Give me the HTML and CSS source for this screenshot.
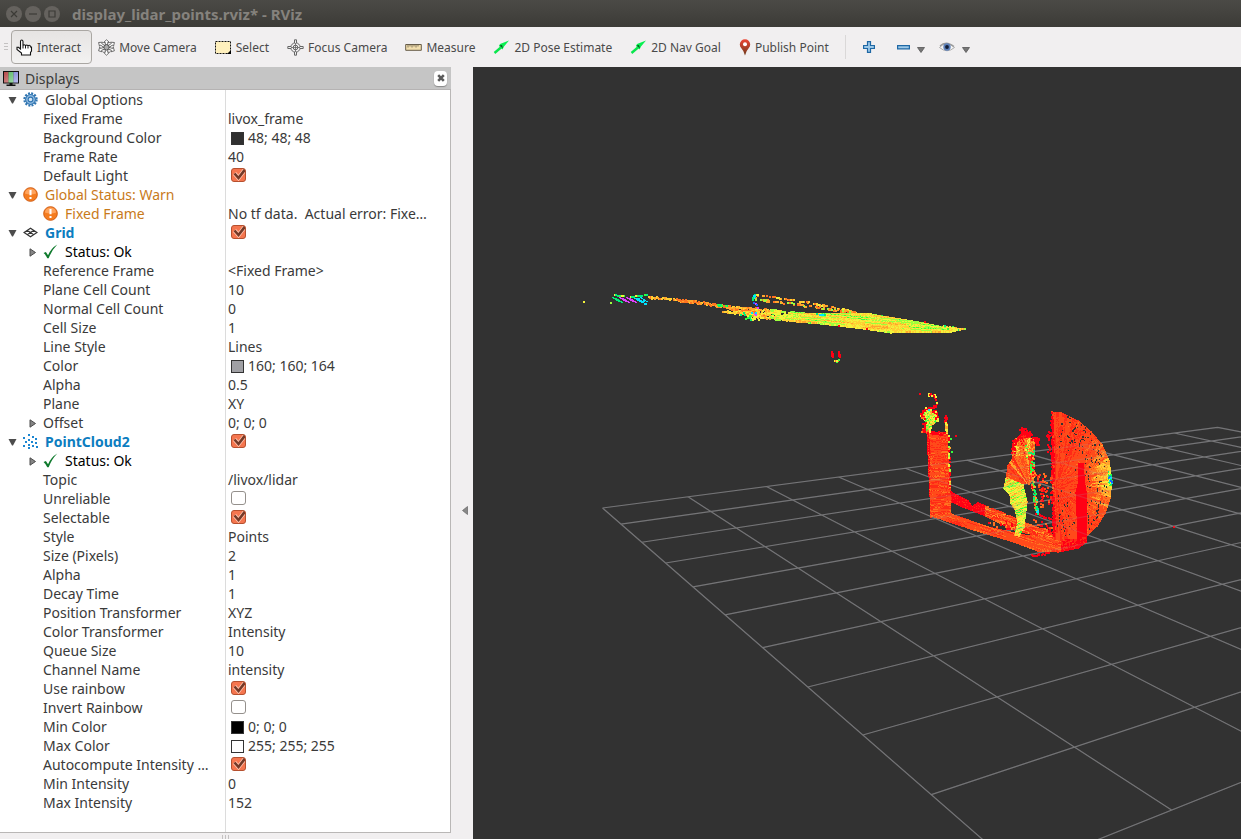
FILE: index.html
```html
<!DOCTYPE html>
<html lang="en">
<head>
    <meta charset="UTF-8">
    <meta name="viewport" content="width=device-width, initial-scale=1.0">
    <title>display_lidar_points.rviz* - RViz</title>
    <link rel="stylesheet" href="styles.css">
</head>
<body>
    <svg class="sprite" aria-hidden="true">
        <symbol id="i-open" viewBox="0 0 9 9"><path d="M.5 1h8L5 7.500H4z" fill="#4c4c4c"/></symbol>
        <symbol id="i-closed" viewBox="0 0 9 9"><path d="M2 .8l5.500 3.700L2 8.200z" fill="#858585" stroke="#4c4c4c"/></symbol>
        <symbol id="i-gear" viewBox="0 0 14 14">
            <circle cx="7" cy="7" r="5.700" fill="none" stroke="#2f74b0" stroke-width="2" stroke-dasharray="1.800 1.180"/>
            <circle cx="7" cy="7" r="4.600" fill="#8db9e0" stroke="#2f74b0"/>
            <circle cx="7" cy="7" r="2.200" fill="#d5e6f5" stroke="#2f74b0"/>
        </symbol>
        <symbol id="i-warn" viewBox="0 0 16 16">
            <circle cx="8" cy="8" r="7.300" fill="#f57c1f" stroke="#cf5a10"/>
            <path d="M2 7a6 5.500 0 0 1 12 0q-6 2-12 0z" fill="#ffa35c"/>
            <path d="M8 3.300v5.400M8 10.700v2" stroke="#fff" stroke-width="2.200"/>
        </symbol>
        <symbol id="i-grid" viewBox="0 0 14 10">
            <path d="M1 5l6-4 6 4-6 4zM4 3l6 4M10 3L4 7" fill="none" stroke="#333" stroke-width="1.100"/>
        </symbol>
        <symbol id="i-ok" viewBox="0 0 14 14"><path d="M.5 8.500l2.200-1 2 3Q7.500 4 13.300.5 8 6 5.300 13.300H4Q2.800 10.500.5 8.500z" fill="#0f7a2d"/></symbol>
        <symbol id="i-cloud" viewBox="0 0 15 15">
            <path d="M5 0h2v2H5zM9 2h2v2H9zM0 3h2v2H0zM5 5h2v2H5zM12 4h2v2h-2zM2 7h2v2H2zM8 7h2v2H8zM12 8h2v2h-2zM0 11h2v2H0zM5 10h2v2H5zM9 11h2v2H9zM13 12h2v2h-2zM5 13h2v2H5z" fill="#1c86d1"/>
        </symbol>
        <symbol id="i-arrow" viewBox="0 0 16 14">
            <path d="M1 13L8 7" stroke="#08e64c" stroke-width="2.400"/>
            <path d="M15.500.5L6.500 4 5.500 6l3.500 3.500 1.500-3z" fill="#08f050"/>
            <path d="M6 5.500L9.500 8.500 8.500 5z" fill="#075b22"/>
        </symbol>
        <symbol id="i-drop" viewBox="0 0 8 6"><path d="M.5.5h7L4 5.500z" fill="#777" stroke="#555" stroke-width=".8"/></symbol>
    </svg>

    <div class="window">
        <header class="titlebar">
            <button class="win-btn" aria-label="Close"><svg viewBox="0 0 16 16"><path d="M5 5l6 6M11 5l-6 6"/></svg></button>
            <button class="win-btn" aria-label="Minimize"><svg viewBox="0 0 16 16"><path d="M4 8h8"/></svg></button>
            <button class="win-btn" aria-label="Maximize"><svg viewBox="0 0 16 16"><path d="M5 5h6v6H5z"/></svg></button>
            <h1 class="title">display_lidar_points.rviz* - RViz</h1>
        </header>

        <nav class="toolbar" aria-label="Tools">
            <span class="grip"></span>
            <button class="tool active">
                <svg width="17" height="17" viewBox="0 0 17 17"><path d="M4.500 10V2.500Q4.500 1 5.700 1T7 2.500V7q0-1.200 1.200-1.200T9.500 7q0-1 1.200-1T12 7.300q0-1 1.200-1T14.500 8h1v4l-1 1.500V16H5.500v-2L1 10.500V8.300h1.500z" fill="#fff" stroke="#111" stroke-width="1.100"/><path d="M7 7v2.500M9.500 7v2.500M12 7.300v2.200" stroke="#111"/></svg>
                <span>Interact</span>
            </button>
            <button class="tool">
                <svg width="17" height="17" viewBox="0 0 17 17"><g fill="#fff" stroke="#4a4a4a" stroke-width=".8"><path d="M8.500.8L11.500 3.500H9.700V6H7.300V3.500H5.500zM8.500 16.200l3-2.900H9.700V10H7.300v3.300H5.500z"/><path d="M.6 3.500L4.500 3.200 3.700 4.500 7 6.800 6 8.500 2.500 6l-1 1.300zM16.400 3.500l-3.900-.3.800 1.300L10 6.800l1 1.700L14.500 6l1 1.300z"/><path d="M.6 11.800l3.600 1-.6-1.600 3.900-1.400-1.200-1.600L2.500 9.500l-.7-1.400zM16.400 11.800l-3.600 1 .6-1.600-3.900-1.400 1.200-1.600 3.800 1.300.7-1.400z"/><path d="M6 7l2.500-1.500L11 7v2.700l-2.500 1.500L6 9.700z" fill="#aaa"/></g></svg>
                <span>Move Camera</span>
            </button>
            <button class="tool">
                <svg width="17" height="17" viewBox="0 0 17 17"><path d="M.5 2.500h15v12H.5z" fill="#fff0bd" stroke="#111" stroke-dasharray="2 1"/><path d="M16 11v4h-4z" fill="#000"/></svg>
                <span>Select</span>
            </button>
            <button class="tool">
                <svg width="17" height="17" viewBox="0 0 17 17"><g fill="none" stroke="#666"><circle cx="8.500" cy="8.500" r="4.700"/><circle cx="8.500" cy="8.500" r="2.300"/><path d="M4 8.500h9M8.500 4v9" stroke-width=".8"/><path d="M7.500 4V.8h2V4M7.500 13v3.200h2V13M4 7.500H.8v2H4M13 7.500h3.200v2H13" fill="#eee"/></g></svg>
                <span>Focus Camera</span>
            </button>
            <button class="tool">
                <svg width="17" height="17" viewBox="0 0 17 17"><path d="M.7 5.500h15.600v5.800H.7z" fill="#f3dfae" stroke="#665c49"/><path d="M3 6v2.500M5 6v1.500M7 6v2.500M9 6v1.500M11 6v2.500M13 6v1.500" stroke="#665c49" stroke-width=".8"/></svg>
                <span>Measure</span>
            </button>
            <button class="tool"><svg width="17" height="14"><use href="#i-arrow"/></svg><span>2D Pose Estimate</span></button>
            <button class="tool"><svg width="17" height="14"><use href="#i-arrow"/></svg><span>2D Nav Goal</span></button>
            <button class="tool">
                <svg width="12" height="17" viewBox="0 0 12 17"><defs><linearGradient id="pin" x2="0" y2="1"><stop offset="0" stop-color="#ee4634"/><stop offset="1" stop-color="#6d3a1c"/></linearGradient></defs><path d="M6 16.500Q5 12 2.200 9A5.200 5.200 0 1 1 9.800 9Q7 12 6 16.500z" fill="url(#pin)"/><circle cx="6" cy="5.300" r="2" fill="#fff"/></svg>
                <span>Publish Point</span>
            </button>
            <span class="separator"></span>
            <button class="tool mini add" aria-label="Add tool"><svg width="12" height="12" viewBox="0 0 12 12"><path d="M4.500.6h3v3.900h3.900v3H7.500v3.900h-3V7.500H.6v-3h3.900z" fill="#9cc8e8" stroke="#1f68a5" stroke-width="1.200"/></svg></button>
            <button class="tool mini" aria-label="Remove tool"><svg width="13" height="5" viewBox="0 0 13 5"><path d="M.6.6h11.800v3.300H.6z" fill="#9cc8e8" stroke="#1f68a5" stroke-width="1.200"/></svg><svg class="drop" width="8" height="6"><use href="#i-drop"/></svg></button>
            <button class="tool mini" aria-label="Visibility"><svg width="16" height="12" viewBox="0 0 16 12"><path d="M.5 6.500Q7-1 15.500 6.500 8 13 .5 6.500z" fill="#f5f5f5" stroke="#aaa"/><path d="M1 5Q7-1 15 5.500" fill="none" stroke="#999" stroke-width="1.300"/><circle cx="8" cy="6" r="3.700" fill="#5c7fb8"/><circle cx="8" cy="6" r="1.900" fill="#101b33"/></svg><svg class="drop" width="8" height="6"><use href="#i-drop"/></svg></button>
        </nav>

        <main class="workspace">
            <section class="dock" aria-label="Displays">
                <div class="dock-header">
                    <svg width="18" height="17" viewBox="0 0 18 17"><defs><linearGradient id="shine" x2="1" y2="1"><stop offset="0" stop-color="#fff" stop-opacity="0"/><stop offset="1" stop-color="#fff" stop-opacity=".5"/></linearGradient></defs><path d="M1 1h16v12.500H1z" fill="#111"/><path d="M2 2h4.500v10.500H2z" fill="#b54a4a"/><path d="M6.500 2h5v10.500h-5z" fill="#55b865"/><path d="M11.500 2H16v10.500h-4.500z" fill="#7379d8"/><path d="M2 2h14v10.500H2z" fill="url(#shine)"/><path d="M7.500 13h3v1.500h3V16h-9v-1.500h3z" fill="#111"/></svg>
                    <h2>Displays</h2>
                    <button class="close" aria-label="Close panel"><svg width="8" height="8" viewBox="0 0 8 8"><path d="M1.200 1.200l5.600 5.600M6.800 1.200L1.200 6.800" stroke="#5a5a5a" stroke-width="2.600"/></svg></button>
                </div>
                <div class="tree-body">
                    <table class="tree">
                        <tbody>
                            <tr class="group"><th><svg class="tw"><use href="#i-open"/></svg><svg class="ic"><use href="#i-gear"/></svg>Global Options</th><td></td></tr>
                            <tr><th>Fixed Frame</th><td>livox_frame</td></tr>
                            <tr><th>Background Color</th><td><i class="swatch dark"></i>48; 48; 48</td></tr>
                            <tr><th>Frame Rate</th><td>40</td></tr>
                            <tr><th><label for="light">Default Light</label></th><td><input type="checkbox" id="light" checked></td></tr>
                            <tr class="group warn"><th><svg class="tw"><use href="#i-open"/></svg><svg class="ic"><use href="#i-warn"/></svg>Global Status: Warn</th><td></td></tr>
                            <tr class="warn"><th><svg class="ic"><use href="#i-warn"/></svg>Fixed Frame</th><td>No tf data.&nbsp; Actual error: Fixe…</td></tr>
                            <tr class="group display"><th><svg class="tw"><use href="#i-open"/></svg><svg class="ic"><use href="#i-grid"/></svg><label for="grid">Grid</label></th><td><input type="checkbox" id="grid" checked></td></tr>
                            <tr class="ok"><th><svg class="tw"><use href="#i-closed"/></svg><svg class="ic"><use href="#i-ok"/></svg>Status: Ok</th><td></td></tr>
                            <tr><th>Reference Frame</th><td>&lt;Fixed Frame&gt;</td></tr>
                            <tr><th>Plane Cell Count</th><td>10</td></tr>
                            <tr><th>Normal Cell Count</th><td>0</td></tr>
                            <tr><th>Cell Size</th><td>1</td></tr>
                            <tr><th>Line Style</th><td>Lines</td></tr>
                            <tr><th>Color</th><td><i class="swatch gray"></i>160; 160; 164</td></tr>
                            <tr><th>Alpha</th><td>0.5</td></tr>
                            <tr><th>Plane</th><td>XY</td></tr>
                            <tr><th><svg class="tw"><use href="#i-closed"/></svg>Offset</th><td>0; 0; 0</td></tr>
                            <tr class="group display"><th><svg class="tw"><use href="#i-open"/></svg><svg class="ic"><use href="#i-cloud"/></svg><label for="cloud">PointCloud2</label></th><td><input type="checkbox" id="cloud" checked></td></tr>
                            <tr class="ok"><th><svg class="tw"><use href="#i-closed"/></svg><svg class="ic"><use href="#i-ok"/></svg>Status: Ok</th><td></td></tr>
                            <tr><th>Topic</th><td>/livox/lidar</td></tr>
                            <tr><th><label for="unreliable">Unreliable</label></th><td><input type="checkbox" id="unreliable"></td></tr>
                            <tr><th><label for="selectable">Selectable</label></th><td><input type="checkbox" id="selectable" checked></td></tr>
                            <tr><th>Style</th><td>Points</td></tr>
                            <tr><th>Size (Pixels)</th><td>2</td></tr>
                            <tr><th>Alpha</th><td>1</td></tr>
                            <tr><th>Decay Time</th><td>1</td></tr>
                            <tr><th>Position Transformer</th><td>XYZ</td></tr>
                            <tr><th>Color Transformer</th><td>Intensity</td></tr>
                            <tr><th>Queue Size</th><td>10</td></tr>
                            <tr><th>Channel Name</th><td>intensity</td></tr>
                            <tr><th><label for="rainbow">Use rainbow</label></th><td><input type="checkbox" id="rainbow" checked></td></tr>
                            <tr><th><label for="invert">Invert Rainbow</label></th><td><input type="checkbox" id="invert"></td></tr>
                            <tr><th>Min Color</th><td><i class="swatch black"></i>0; 0; 0</td></tr>
                            <tr><th>Max Color</th><td><i class="swatch white"></i>255; 255; 255</td></tr>
                            <tr><th><label for="auto">Autocompute Intensity …</label></th><td><input type="checkbox" id="auto" checked></td></tr>
                            <tr><th>Min Intensity</th><td>0</td></tr>
                            <tr><th>Max Intensity</th><td>152</td></tr>
                        </tbody>
                    </table>
                </div>
                <div class="dock-grip"><span></span></div>
            </section>
            <button class="collapse" aria-label="Hide panel"><svg width="6" height="9" viewBox="0 0 6 9"><path d="M5.500.5v8L.5 4.500z" fill="#888" stroke="#666" stroke-width=".7"/></svg></button>
            <div class="viewport"><canvas id="scene"></canvas></div>
        </main>
    </div>
    <script src="scene.js"></script>
</body>
</html>
```

FILE: styles.css
```css
* {
    box-sizing: border-box;
}
body {
    margin: 0;
    background: #f1eff0;
    color: #3a3a3a;
    font-family: "Noto Sans", "Open Sans", sans-serif;
    font-size: 14px;
}
button {
    border: 0;
    padding: 0;
    background: none;
    color: inherit;
    font: inherit;
}
.sprite {
    position: absolute;
    width: 0;
    height: 0;
}
.window {
    display: flex;
    flex-direction: column;
    height: 100vh;
    overflow: hidden;
}

/* title bar */
.titlebar {
    display: flex;
    align-items: center;
    flex: none;
    gap: 3px;
    height: 27px;
    padding-left: 6px;
    background: linear-gradient(#4b4a46, #3c3b37);
}
.win-btn {
    width: 16px;
    height: 16px;
    border-radius: 50%;
    background: #65625e;
}
.win-btn svg {
    display: block;
    fill: none;
    stroke: #3c3b37;
    stroke-width: 1.2;
}
.title {
    margin: 0 0 0 9px;
    color: #85827d;
    font-size: 15px;
    font-weight: bold;
}

/* toolbar */
.toolbar {
    display: flex;
    align-items: center;
    flex: none;
    height: 40px;
    padding-left: 4px;
    color: #4a4a4a;
    font-size: 12px;
    white-space: nowrap;
}
.grip {
    width: 4px;
    height: 9px;
    margin-right: 3px;
    background: repeating-linear-gradient(#c4c2c2 0 1px, transparent 1px 3px);
}
.tool {
    display: flex;
    align-items: center;
    gap: 4px;
    height: 34px;
    padding: 0 12px 0 6px;
}
.tool svg {
    flex: none;
}
.tool.active {
    padding: 0 10px 0 4px;
    border: 1px solid #aaa7a3;
    border-radius: 4px;
    background: linear-gradient(#e6e4e3, #f3f2f1);
}
.separator {
    width: 1px;
    height: 24px;
    margin: 0 10px 0 4px;
    background: #dad8d8;
}
.tool.mini {
    padding: 0 7px;
}
.tool.add {
    margin-right: 8px;
}
.drop {
    margin: 6px 0 0 3px;
}

/* displays panel */
.workspace {
    display: flex;
    flex: 1;
    min-height: 0;
}
.dock {
    display: flex;
    flex-direction: column;
    flex: none;
    width: 451px;
}
.dock-header {
    display: flex;
    align-items: center;
    gap: 5px;
    height: 23px;
    padding: 0 4px 0 2px;
    border-bottom: 1px solid #b5b3b3;
    background: #c5c5c5;
}
.dock-header h2 {
    flex: 1;
    margin: 0;
    font-size: 14px;
    font-weight: normal;
}
.close {
    display: flex;
    align-items: center;
    justify-content: center;
    width: 13px;
    height: 15px;
    border-radius: 4px;
    background: #fff;
    box-shadow: 0 1px 1px #888;
}
.tree-body {
    flex: 1;
    min-height: 0;
    overflow: hidden;
    border: solid #b9b7b6;
    border-width: 0 1px 1px 0;
    background: linear-gradient(#dcdcdc, #dcdcdc) 225px 0 / 1px 100% no-repeat, #fff;
}
.tree {
    width: 100%;
    table-layout: fixed;
    border-collapse: collapse;
    line-height: 19px;
}
.tree th,
.tree td {
    height: 19px;
    padding: 0 10px 0 2px;
    overflow: hidden;
    font-weight: normal;
    text-align: left;
    text-overflow: ellipsis;
    white-space: nowrap;
}
.tree th {
    width: 226px;
    padding: 0 7px 0 43px;
}
.tree .group th {
    padding-left: 23px;
}
.tree .warn th {
    color: #c97a1a;
}
.tree .display th {
    color: #0c7dc0;
    font-weight: bold;
}
.tree .ok th {
    color: #000;
}
.tw {
    width: 9px;
    height: 9px;
    margin: 0 6px 0 -15px;
}
.ic {
    width: 15px;
    height: 15px;
    margin-right: 7px;
    vertical-align: -2px;
}
.swatch {
    display: inline-block;
    width: 13px;
    height: 13px;
    margin: 0 4px 0 3px;
    border: 1px solid #333;
    vertical-align: -2px;
}
.dark {
    background: #303030;
}
.gray {
    background: #a0a0a4;
}
.black {
    background: #000;
}
.white {
    background: #fff;
}
input[type="checkbox"] {
    display: block;
    width: 15px;
    height: 14px;
    margin: 0 0 1px 3px;
    appearance: none;
    border: 1px solid #94908c;
    border-radius: 3px;
    background: #fff;
}
input[type="checkbox"]:checked {
    border-color: #b5502f;
    background: url('data:image/svg+xml,<svg xmlns="http://www.w3.org/2000/svg" viewBox="0 0 12 12"><path d="M1.500 4.500l4 4.500L12 .5" fill="none" stroke="%23ffc3ad" stroke-width="4.200"/><path d="M1.500 4.500l4 4.500L12 .5" fill="none" stroke="%23743a28" stroke-width="2.600"/></svg>') center / 12px 12px no-repeat, #f5764f;
}
.dock-grip {
    display: flex;
    justify-content: center;
    height: 6px;
    padding-top: 2px;
}
.dock-grip span {
    width: 8px;
    height: 4px;
    background: repeating-linear-gradient(90deg, #c4c2c2 0 1px, transparent 1px 3px);
}
.collapse {
    flex: none;
    width: 22px;
    padding: 113px 0 0 6px;
}

/* 3d view */
.viewport {
    flex: 1;
    min-width: 0;
    overflow: hidden;
    background: #323232;
}
#scene {
    display: block;
    width: 100%;
    height: 100%;
}
```

FILE: scene.js
```js
const canvas = document.getElementById('scene');
const ctx = canvas.getContext('2d');

const RED = '#ff0014', VERM = '#ff2a16', ORED = '#ff4a1a', ORG = '#ff7420', AMBER = '#ffa52c';
const GOLD = '#ffd033', YEL = '#f2f23c', LIME = '#9cff3c', GRN = '#35ff3c', MINT = '#00f078';
const CYAN = '#00e4ff', BLUE = '#1464ff', MAG = '#e040ff';
const BACK = '#323232';

let seed = 7;
function rnd() {
    seed = (seed * 1664525 + 1013904223) % 4294967296;
    return seed / 4294967296;
}

// repeatable value for a cell, used for streaks and gaps
function hash(a, b) {
    const s = Math.sin(Math.floor(a) * 127.1 + Math.floor(b) * 311.7) * 43758.5453;
    return s - Math.floor(s);
}

function pick(list, t) {
    return list[Math.max(0, Math.min(list.length - 1, Math.floor(t * list.length)))];
}

function dot(x, y, color) {
    ctx.fillStyle = color;
    ctx.fillRect(Math.round(x), Math.round(y), 2, 2);
}

// fill a polygon with points; color(x, y) may return null for a gap
function cloud(points, color) {
    const path = new Path2D();
    points.forEach((p, i) => i ? path.lineTo(p[0], p[1]) : path.moveTo(p[0], p[1]));
    path.closePath();
    const xs = points.map(p => p[0]), ys = points.map(p => p[1]);
    ctx.save();
    ctx.setTransform(1, 0, 0, 1, 0, 0);
    const inside = [];
    for (let y = Math.min(...ys); y <= Math.max(...ys); y++) {
        for (let x = Math.min(...xs); x <= Math.max(...xs); x++) {
            if (ctx.isPointInPath(path, x, y)) inside.push([x, y]);
        }
    }
    ctx.restore();
    inside.forEach(([x, y]) => {
        const c = color(x, y);
        if (c) dot(x, y, c);
    });
}

// points scattered along a line
function trail(points, width, count, colors) {
    for (let s = 0; s < points.length - 1; s++) {
        const [x1, y1] = points[s], [x2, y2] = points[s + 1];
        for (let i = 0; i < count; i++) {
            const t = rnd();
            dot(x1 + (x2 - x1) * t + (rnd() - 0.5) * width, y1 + (y2 - y1) * t + (rnd() - 0.5) * width, pick(colors, rnd()));
        }
    }
}

function streak(x, y, slope, length) {
    const row = y - x * slope;
    return hash(x / length + hash(row, 3) * 9, row) * 0.8 + rnd() * 0.2;
}

// 10 x 10 ground plane in perspective
function ground(u, v) {
    const w = 1 + 0.04533 * u - 0.05833 * v;
    return [(602.5 + 116.7 * u - 17.79 * v) / w, (508 + 11.3 * u - 14.5 * v) / w];
}

function drawGrid() {
    ctx.strokeStyle = 'rgba(160, 160, 164, 0.5)';
    ctx.lineWidth = 1.2;
    ctx.beginPath();
    for (let i = 0; i <= 10; i++) {
        ctx.moveTo(...ground(i, 0));
        ctx.lineTo(...ground(i, 10));
        ctx.moveTo(...ground(0, i));
        ctx.lineTo(...ground(10, i));
    }
    ctx.stroke();
}

function drawRoof() {
    trail([[646, 296], [673, 299], [700, 302], [728, 306]], 2, 30, [ORG, AMBER, GOLD]);
    trail([[676, 299], [700, 302], [732, 307]], 3, 30, [ORG, AMBER, ORG]);
    trail([[755, 294], [790, 299], [825, 305], [858, 312]], 1, 26, [YEL, AMBER, ORG, GOLD]);
    trail([[754, 298], [790, 303], [825, 308], [856, 312]], 2, 26, [AMBER, ORG, AMBER, LIME]);
    cloud([[721, 305], [757, 307], [803, 312], [840, 313], [870, 313], [893, 317], [917, 321],
        [937, 325], [964, 328], [950, 331], [920, 331], [890, 332], [863, 328], [820, 323],
        [783, 320], [757, 317], [736, 312]], (x, y) => {
        const t = streak(x, y, 0.1, 22);
        if (x < 790 && rnd() < 0.5) return null;
        if (x < 770) return pick([ORG, AMBER, GOLD, AMBER, YEL], t);
        return pick([AMBER, GOLD, YEL, GOLD, YEL, LIME, LIME, GRN], t);
    });
    trail([[722, 311], [737, 312], [760, 316]], 2, 20, [AMBER, YEL, GOLD]);
    trail([[740, 314], [756, 319]], 5, 18, [GRN, MINT, YEL]);
    trail([[714, 305], [726, 304]], 2, 12, [MINT, CYAN, GRN]);
    trail([[751, 300], [754, 294]], 1, 14, [CYAN, MINT]);
    trail([[752, 303], [757, 306]], 3, 5, [MAG, BLUE]);
    trail([[748, 312], [755, 313]], 2, 5, [MAG, CYAN]);
    trail([[815, 313], [825, 314]], 1, 8, [CYAN, MINT]);
    trail([[944, 326], [958, 329]], 3, 12, [GRN, MINT, YEL]);
    // far left cluster of short diagonal strokes
    const cluster = [MINT, MINT, MAG, MAG, MAG, MAG, CYAN, CYAN, CYAN];
    cluster.forEach((c, i) => {
        for (let k = 0; k < 5; k++) {
            ctx.fillStyle = c;
            ctx.fillRect(612 + i * 3.5 + k * 1.5 | 0, 297 + k + i % 2, 2, 1);
        }
    });
    trail([[614, 294], [630, 296], [647, 294]], 1, 12, [YEL, GRN, MINT]);
    trail([[637, 298], [645, 303]], 2, 12, [CYAN]);
    dot(583, 301, YEL);
    dot(610, 302, LIME);
    dot(838, 325, RED);
    dot(866, 328, RED);
    dot(924, 321, RED);
    trail([[831, 351], [832, 356]], 1, 12, [RED]);
    trail([[838, 351], [839, 356]], 1, 12, [RED]);
    trail([[833, 358], [836, 361], [838, 359]], 1, 6, [YEL, GRN, ORG]);
}

function drawColumn() {
    cloud([[926, 432], [946, 432], [949, 480], [950, 514], [930, 516], [928, 475]], (x, y) => {
        if (x < 930 && rnd() < 0.6) return RED;
        if (y > 500 && hash(x - y * 0.6, y / 5) > 0.86) return null;
        return pick([VERM, ORED, ORED, VERM, ORG], streak(x, y, 0.1, 10));
    });
    trail([[927, 432], [946, 433]], 3, 24, [RED]);
    trail([[945, 416], [945, 423]], 2, 14, [RED]);
    trail([[945, 422], [946, 432]], 1, 22, [YEL, AMBER]);
    trail([[948, 434], [949, 492]], 1, 40, [YEL, LIME, AMBER, RED]);
    cloud([[922, 413], [928, 408], [934, 413], [936, 420], [931, 424], [929, 431], [923, 431], [925, 421], [920, 415]],
        (x, y) => rnd() < 0.15 ? null : pick([AMBER, YEL, YEL, LIME, GRN, GOLD], streak(x, y, -0.8, 5)));
    trail([[921, 412], [927, 407], [935, 412], [937, 420]], 3, 12, [RED, RED, YEL]);
    trail([[921, 413], [924, 421], [922, 430], [928, 432]], 3, 12, [RED, ORG]);
    trail([[928, 394], [934, 395], [937, 402], [932, 406]], 3, 9, [RED, RED, YEL]);
    dot(919, 393, RED);
    dot(928, 409, CYAN);
    dot(950, 438, GRN);
    dot(951, 451, GRN);
    dot(955, 435, RED);
}

function drawFloor() {
    cloud([[950, 491], [967, 500], [971, 506], [977, 502], [1000, 511], [1018, 519], [1050, 532],
        [1053, 538], [1015, 530], [987, 516], [970, 509], [962, 506], [951, 501]], (x, y) => {
        if (x < 985) return rnd() < 0.15 ? VERM : RED;
        if (rnd() < 0.12) return null;
        return pick([VERM, ORED, ORG, VERM, AMBER], streak(x, y, 0.35, 7));
    });
    cloud([[930, 515], [950, 513], [987, 526], [1023, 534], [1053, 537], [1070, 538], [1085, 533],
        [1085, 541], [1077, 547], [1057, 551], [1037, 550], [1013, 541], [973, 529], [943, 519]], (x, y) => {
        if (x > 1060) return rnd() < 0.3 ? VERM : RED;
        if (rnd() < 0.03) return null;
        return pick([VERM, ORED, ORED, ORG], streak(x, y, 0.33, 12));
    });
    trail([[988, 521], [1012, 526]], 7, 20, [ORG, RED]);
    trail([[1031, 555], [1049, 552]], 2, 16, [RED]);
    dot(1173, 526, RED);
}

function drawPerson() {
    cloud([[1024, 431], [1034, 440], [1033, 450], [1031, 465], [1035, 474], [1028, 483], [1014, 482],
        [1005, 478], [1007, 465], [1012, 457], [1011, 448], [1015, 438]], (x, y) => {
        if (y < 438) return rnd() < 0.2 ? null : pick([RED, RED, VERM], rnd());
        const angle = Math.atan2(y - 487, x - 1030) * 14;
        if (y < 456) return pick([RED, ORED, ORG, AMBER, YEL], hash(angle, 2) * 0.5 + rnd() * 0.5);
        return pick([VERM, ORED, ORG, ORED, AMBER], hash(angle, 1) * 0.8 + rnd() * 0.2);
    });
    trail([[1012, 452], [1014, 441], [1024, 431], [1034, 438], [1038, 442]], 5, 16, [RED]);
    trail([[1020, 428], [1029, 432]], 4, 18, [RED]);
    trail([[1025, 446], [1028, 456]], 4, 16, [YEL, GRN, AMBER]);
    cloud([[1005, 478], [1012, 480], [1022, 484], [1026, 501], [1023, 526], [1018, 535], [1014, 534],
        [1017, 522], [1014, 508], [1010, 502], [1009, 494], [1003, 487]],
        (x, y) => pick([AMBER, GOLD, YEL, YEL, LIME, GRN], streak(x, y, -0.5, 5)));
    trail([[1032, 450], [1031, 475], [1034, 497], [1037, 514]], 3, 30, [MINT, GRN, ORG, RED, AMBER]);
    trail([[1036, 505], [1037, 514]], 1, 12, [CYAN, MINT]);
    trail([[1037, 514], [1054, 520]], 1, 14, [RED]);
    cloud([[1036, 472], [1052, 474], [1053, 503], [1040, 507]],
        () => rnd() < 0.14 ? pick([VERM, ORG, ORED, RED], rnd()) : null);
    trail([[1034, 521], [1052, 530]], 6, 24, [RED, ORED, ORG]);
}

function drawDisc() {
    const outline = [[1051, 411], [1060, 412], [1077, 420], [1090, 431], [1101, 444], [1108, 460], [1111, 480],
        [1109, 497], [1104, 512], [1096, 525], [1085, 535], [1072, 542], [1053, 538], [1052, 480]];
    cloud(outline, (x, y) => {
        const dx = x - 1056, dy = y - 488;
        const dist = Math.hypot(dx, dy), angle = Math.atan2(dy, dx);
        const rim = Math.max(0, 1 - Math.hypot(x - 1110, (y - 478) * 0.6) / 28);
        const side = (x - 1052) / 60 * 0.18;
        const t = hash(angle * 26, dist / 9) * 0.3 + rnd() * 0.18 + side + rim * 0.45;
        if (x > 1107 && y > 470 && y < 486) return pick([YEL, GRN, MINT], rnd());
        return pick([VERM, VERM, ORED, ORED, ORG, AMBER, GOLD, YEL], t);
    });
    // gaps between the scan lines, denser towards the rim
    for (let i = 0; i < 190; i++) {
        const a = (rnd() - 0.5) * 2.9, d = 22 + Math.sqrt(rnd()) * 44;
        const x = 1054 + Math.cos(a) * d * 0.83, y = 478 + Math.sin(a) * d;
        if (x < 1058 || x > 1107) continue;
        ctx.fillStyle = BACK;
        ctx.fillRect(x | 0, y | 0, y < 445 && rnd() < 0.4 ? 2 : 1, 1 + Math.round(rnd()));
    }
    for (let y = 490; y < 532; y += 5) {
        ctx.fillStyle = BACK;
        ctx.fillRect(1056 + (rnd() * 14 | 0), y, 1, 2);
    }
    trail([[1051, 411], [1052, 450], [1052, 480], [1053, 536]], 2, 50, [RED]);
    trail([[1047, 430], [1050, 455]], 4, 16, [RED]);
    trail([[1109, 476], [1110, 482]], 2, 10, [BLUE, CYAN]);
    cloud([[1078, 463], [1082, 463], [1084, 485], [1085, 491], [1085, 538], [1077, 537], [1075, 492], [1077, 484]],
        () => RED);
    trail([[1060, 542], [1083, 539]], 4, 60, [RED, VERM]);
}

function draw() {
    canvas.width = canvas.clientWidth;
    canvas.height = canvas.clientHeight;
    seed = 7;
    ctx.translate(-473, -67);
    drawGrid();
    drawRoof();
    drawColumn();
    drawFloor();
    drawDisc();
    drawPerson();
    // the ground lines stay faintly visible over the points
    ctx.globalAlpha = 0.4;
    drawGrid();
    ctx.globalAlpha = 1;
}

window.addEventListener('resize', draw);
draw();
```
